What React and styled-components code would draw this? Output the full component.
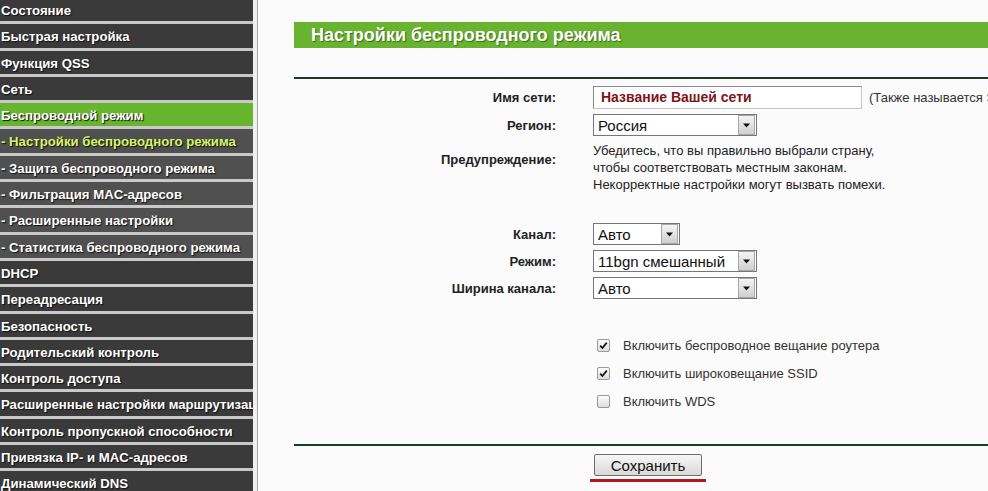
import React from "react";
import styled, { createGlobalStyle } from "styled-components";

const Global = createGlobalStyle`
  html, body {
    margin: 0;
    padding: 0;
    background: #fbfbfb;
    overflow: hidden;
  }
  body {
    font-family: "Liberation Sans", Arial, sans-serif;
  }
`;

const Page = styled.div`
  display: flex;
  width: 988px;
  height: 491px;
  overflow: hidden;
`;

const Sidebar = styled.ul`
  width: 253px;
  margin: -2px 0 0;
  padding: 0;
  list-style: none;
  background: #c9c9c9;
  flex-shrink: 0;
`;

const MenuItem = styled.li`
  height: 21.3px;
  line-height: 21.3px;
  padding: 2px 0 0 1px;
  margin-bottom: 3px;
  white-space: nowrap;
  overflow: hidden;
  font-size: 13.2px;
  font-weight: bold;
  color: ${({ $active }) => ($active ? "#d6f56b" : "#ffffff")};
  text-shadow: 1px 1px 1px #111;
  background: ${({ $green, $sub }) =>
    $green ? "#67b42f" : $sub ? "#505050" : "#3a3a3a"};
`;

const Divider = styled.div`
  width: 4px;
  flex-shrink: 0;
  background: #f0f0f0;
  border-right: 1px solid #a9a9a9;
`;

const Main = styled.div`
  flex: 1;
  padding: 22px 0 0 36px;
  color: #222;
`;

const Header = styled.div`
  height: 26px;
  line-height: 26px;
  padding-left: 17px;
  background: #68b32f;
  color: #fff;
  font-size: 18px;
  font-weight: bold;
  text-shadow: 1px 1px 1px #3d6d1a;
`;

const Rule = styled.div`
  height: 2px;
  background: #163d20;
  margin-top: ${({ $top }) => $top}px;
`;

const FieldRow = styled.div`
  display: grid;
  grid-template-columns: 262px 1fr;
  column-gap: 37px;
  align-items: ${({ $start }) => ($start ? "start" : "center")};
  margin-top: ${({ $top }) => $top}px;
`;

const Label = styled.div`
  text-align: right;
  font-size: 13px;
  font-weight: bold;
  color: #222;
  padding-top: ${({ $pad }) => $pad || 0}px;
`;

const Control = styled.div`
  display: flex;
  align-items: center;
  gap: 7px;
`;

const TextInput = styled.div`
  width: 260px;
  height: 21px;
  line-height: 21px;
  padding-left: 7px;
  border: 1px solid #8a8a8a;
  border-right-color: #c4c4c4;
  border-bottom-color: #c4c4c4;
  background: #fff;
  color: #7b1518;
  font-size: 14px;
  font-weight: bold;
`;

const Hint = styled.span`
  font-size: 13px;
  color: #333;
  white-space: nowrap;
`;

const Select = styled.div`
  display: flex;
  align-items: center;
  justify-content: space-between;
  box-sizing: border-box;
  width: ${({ $w }) => $w}px;
  height: 22px;
  padding: 0 1px 0 4px;
  border: 1px solid #777;
  background: #fff;
  font-size: 15px;
  color: #111;
`;

const ArrowBox = styled.span`
  display: flex;
  align-items: center;
  justify-content: center;
  width: 15px;
  height: 18px;
  border: 1px solid #a7a7a7;
  background: linear-gradient(#f4f4f4, #cfcfcf);
`;

const Warning = styled.div`
  padding-top: 2px;
  font-size: 13px;
  line-height: 17px;
  color: #222;
`;

const CheckRow = styled.label`
  display: flex;
  align-items: center;
  gap: 13px;
  padding-left: 4px;
  height: 28px;
  font-size: 13px;
  color: #333;
`;

const Box = styled.span`
  display: flex;
  align-items: center;
  justify-content: center;
  width: 11px;
  height: 11px;
  border: 1px solid #9a9a9a;
  border-radius: 2px;
  background: linear-gradient(#fdfdfd, #dcdcdc);
`;

const ButtonBar = styled.div`
  margin-top: 8px;
  padding-left: 300px;
`;

const SaveButton = styled.button`
  display: block;
  width: 108px;
  height: 22px;
  padding: 0;
  border: 1px solid #6d6d6d;
  border-radius: 2px;
  background: linear-gradient(#f7f7f7, #d9d9d9);
  font-family: "Liberation Sans", Arial, sans-serif;
  font-size: 15px;
  color: #111;
`;

const Underline = styled.div`
  width: 116px;
  height: 3px;
  margin: 3px 0 0 -4px;
  background: #b5171d;
`;

const Arrow = () => (
  <ArrowBox>
    <svg width="7" height="7" viewBox="0 0 7 7">
      <path d="M0 1.5h7L3.5 5.5z" fill="#111" />
    </svg>
  </ArrowBox>
);

const Check = ({ checked }) => (
  <Box>
    {checked && (
      <svg width="9" height="9" viewBox="0 0 9 9">
        <path d="M1.2 4.6l2.2 2.4L7.8 1.6" fill="none" stroke="#111" strokeWidth="1.7" />
      </svg>
    )}
  </Box>
);

const menu = [
  { t: "Состояние" },
  { t: "Быстрая настройка" },
  { t: "Функция QSS" },
  { t: "Сеть" },
  { t: "Беспроводной режим", green: true },
  { t: "- Настройки беспроводного режима", sub: true, active: true },
  { t: "- Защита беспроводного режима", sub: true },
  { t: "- Фильтрация MAC-адресов", sub: true },
  { t: "- Расширенные настройки", sub: true },
  { t: "- Статистика беспроводного режима", sub: true },
  { t: "DHCP" },
  { t: "Переадресация" },
  { t: "Безопасность" },
  { t: "Родительский контроль" },
  { t: "Контроль доступа" },
  { t: "Расширенные настройки маршрутизации" },
  { t: "Контроль пропускной способности" },
  { t: "Привязка IP- и MAC-адресов" },
  { t: "Динамический DNS" },
];

export default function App() {
  return (
    <Page>
      <Global />
      <Sidebar>
        {menu.map((m) => (
          <MenuItem key={m.t} $green={m.green} $sub={m.sub} $active={m.active}>
            {m.t}
          </MenuItem>
        ))}
      </Sidebar>
      <Divider />
      <Main>
        <Header>Настройки беспроводного режима</Header>
        <Rule $top={29} />

        <FieldRow $top={7}>
          <Label>Имя сети:</Label>
          <Control>
            <TextInput>Название Вашей сети</TextInput>
            <Hint>(Также называется SSID)</Hint>
          </Control>
        </FieldRow>

        <FieldRow $top={5}>
          <Label>Регион:</Label>
          <Control>
            <Select $w={164}>
              Россия
              <Arrow />
            </Select>
          </Control>
        </FieldRow>

        <FieldRow $top={4} $start>
          <Label $pad={12}>Предупреждение:</Label>
          <Warning>
            Убедитесь, что вы правильно выбрали страну,
            <br />
            чтобы соответствовать местным законам.
            <br />
            Некорректные настройки могут вызвать помехи.
          </Warning>
        </FieldRow>

        <FieldRow $top={30}>
          <Label>Канал:</Label>
          <Control>
            <Select $w={87}>
              Авто
              <Arrow />
            </Select>
          </Control>
        </FieldRow>

        <FieldRow $top={5}>
          <Label>Режим:</Label>
          <Control>
            <Select $w={164}>
              11bgn смешанный
              <Arrow />
            </Select>
          </Control>
        </FieldRow>

        <FieldRow $top={5}>
          <Label>Ширина канала:</Label>
          <Control>
            <Select $w={164}>
              Авто
              <Arrow />
            </Select>
          </Control>
        </FieldRow>

        <FieldRow $top={32}>
          <div />
          <div>
            <CheckRow>
              <Check checked />
              Включить беспроводное вещание роутера
            </CheckRow>
            <CheckRow>
              <Check checked />
              Включить широковещание SSID
            </CheckRow>
            <CheckRow>
              <Check />
              Включить WDS
            </CheckRow>
          </div>
        </FieldRow>

        <Rule $top={29} />
        <ButtonBar>
          <SaveButton>Сохранить</SaveButton>
          <Underline />
        </ButtonBar>
      </Main>
    </Page>
  );
}
